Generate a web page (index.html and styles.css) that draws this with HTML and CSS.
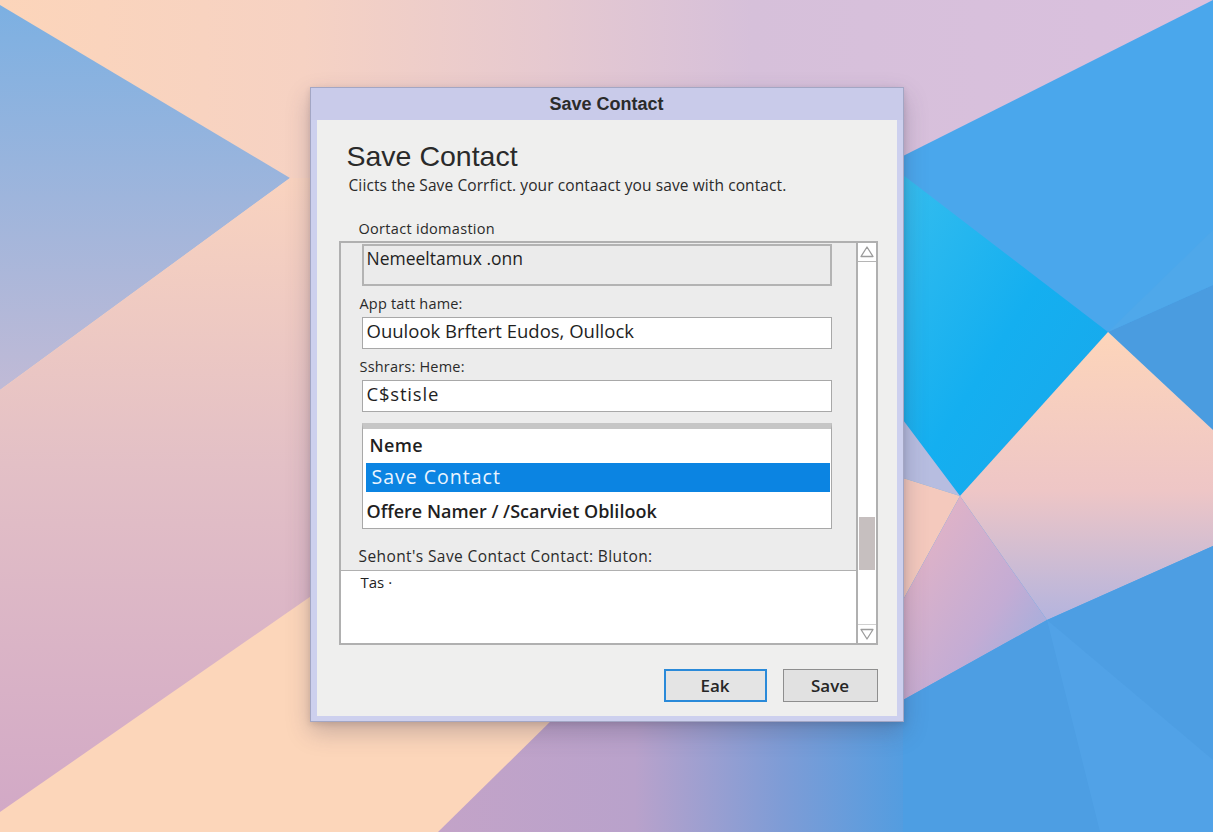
FILE: index.html
```html
<!DOCTYPE html>
<html lang="en">
<head>
<meta charset="utf-8">
<title>Save Contact</title>
<link rel="stylesheet" href="styles.css">
</head>
<body>
<div class="desktop">
  <svg class="wallpaper" viewBox="0 0 1213 832" preserveAspectRatio="none" aria-hidden="true">
    <defs>
      <linearGradient id="gTop" x1="0" y1="0" x2="1" y2="0">
        <stop offset="0" stop-color="#fcd5ba"/>
        <stop offset="0.25" stop-color="#f6d2c3"/>
        <stop offset="0.45" stop-color="#e6c9d0"/>
        <stop offset="0.62" stop-color="#d6c0da"/>
        <stop offset="1" stop-color="#dac0de"/>
      </linearGradient>
      <linearGradient id="gBlueL" x1="0" y1="0" x2="0" y2="1">
        <stop offset="0" stop-color="#7cb0e2"/>
        <stop offset="1" stop-color="#c0bad6"/>
      </linearGradient>
      <linearGradient id="gMidL" x1="0" y1="0" x2="0" y2="1">
        <stop offset="0" stop-color="#f9d3bf"/>
        <stop offset="0.45" stop-color="#e3c0c6"/>
        <stop offset="1" stop-color="#d2a9c6"/>
      </linearGradient>
      <linearGradient id="gPurple" x1="0" y1="0" x2="1" y2="0">
        <stop offset="0" stop-color="#c3a3c8"/>
        <stop offset="0.4" stop-color="#b9a2cb"/>
        <stop offset="0.7" stop-color="#7e9cd6"/>
        <stop offset="1" stop-color="#4a9de2"/>
      </linearGradient>
      <linearGradient id="gCyan" x1="0" y1="0" x2="1" y2="1">
        <stop offset="0" stop-color="#35bdee"/>
        <stop offset="0.5" stop-color="#14aff0"/>
        <stop offset="1" stop-color="#1aa7ea"/>
      </linearGradient>
      <linearGradient id="gPeachR" x1="0" y1="0" x2="0" y2="1">
        <stop offset="0" stop-color="#fdd5ba"/>
        <stop offset="0.55" stop-color="#eec6c6"/>
        <stop offset="1" stop-color="#b4b4de"/>
      </linearGradient>
      <linearGradient id="gPinkR" x1="0" y1="0" x2="1" y2="1">
        <stop offset="0" stop-color="#eab5c2"/>
        <stop offset="0.6" stop-color="#c4acd4"/>
        <stop offset="1" stop-color="#90b0e2"/>
      </linearGradient>
    </defs>
    <rect x="0" y="0" width="1213" height="832" fill="#fcd6ba"/>
    <rect x="0" y="0" width="1213" height="320" fill="url(#gTop)"/>
    <polygon points="0,5 290,178 0,390" fill="url(#gBlueL)"/>
    <polygon points="0,390 290,178 330,178 330,583 0,812" fill="url(#gMidL)"/>
    <polygon points="560,712 930,690 930,832 438,832" fill="url(#gPurple)"/>
    <polygon points="903,156 1213,0 1213,832 903,832" fill="#4aa7ec"/>
    <polygon points="1108,332 1213,285 1213,430" fill="#4a9ce0"/>
    <polygon points="1108,332 1213,230 1213,285" fill="#4fa8ea"/>
    <polygon points="903,175 1108,332 960,496 903,420" fill="url(#gCyan)"/>
    <polygon points="903,420 960,496 903,478" fill="#b7bde0"/>
    <polygon points="960,496 1108,332 1213,430 1213,546 1047,620" fill="url(#gPeachR)"/>
    <polygon points="903,478 960,496 903,600" fill="#f4c9bd"/>
    <polygon points="960,496 1047,620 903,700 903,600" fill="url(#gPinkR)"/>
    <polygon points="903,700 1047,620 1213,546 1213,832 903,832" fill="#4d9ee3"/>
    <polygon points="1047,620 1213,760 1213,832 1100,832" fill="#52a4e8" opacity="0.7"/>
  </svg>

  <div class="dialog">
    <div class="titlebar">Save Contact</div>
    <div class="dialog-body">
      <h1 class="heading">Save Contact</h1>
      <p class="subtitle">Ciicts the Save Corrfict. your contaact you save with contact.</p>
      <div class="section-label">Oortact idomastion</div>
      <div class="panel">
        <div class="panel-content">
          <div class="panel-form">
            <div class="field field-gray">Nemeeltamux .onn</div>
            <div class="label">App tatt hame:</div>
            <div class="field">Ouulook Brftert Eudos, Oullock</div>
            <div class="label">Sshrars: Heme:</div>
            <div class="field field-short">C$stisle</div>
            <div class="listbox">
              <div class="list-row list-head">Neme</div>
              <div class="list-row list-selected">Save Contact</div>
              <div class="list-row list-last">Offere Namer / /Scarviet Oblilook</div>
            </div>
            <div class="label label-last">Sehont's Save Contact Contact: Bluton:</div>
          </div>
          <div class="panel-notes">Tas ·</div>
        </div>
        <div class="scrollbar">
          <div class="scroll-btn scroll-up">
            <svg width="18" height="16" viewBox="0 0 18 16"><path d="M3 12.5 L9 3 L15 12.5 Z" fill="none" stroke="#9c9c9c" stroke-width="1.3" stroke-linejoin="round"/></svg>
          </div>
          <div class="scroll-track">
            <div class="scroll-thumb"></div>
          </div>
          <div class="scroll-btn scroll-down">
            <svg width="18" height="16" viewBox="0 0 18 16"><path d="M3 3.5 L9 13 L15 3.5 Z" fill="none" stroke="#9c9c9c" stroke-width="1.3" stroke-linejoin="round"/></svg>
          </div>
        </div>
      </div>
      <div class="actions">
        <button class="btn btn-primary">Eak</button>
        <button class="btn">Save</button>
      </div>
    </div>
  </div>
</div>
</body>
</html>
```
FILE: styles.css
```css
* { box-sizing: border-box; }

html, body {
  margin: 0;
  padding: 0;
}

body {
  font-family: "Open Sans", "Liberation Sans", Arial, sans-serif;
  color: #222;
  overflow: hidden;
}

.desktop {
  position: relative;
  width: 1213px;
  height: 832px;
  display: flex;
  justify-content: center;
  align-items: flex-start;
  padding-top: 87px;
}

.wallpaper {
  position: absolute;
  left: 0;
  top: 0;
  width: 1213px;
  height: 832px;
  z-index: 0;
}

.dialog {
  position: relative;
  z-index: 1;
  width: 594px;
  height: 635px;
  background: #cdd0ee;
  border: 1px solid #a3a6c4;
  padding: 0 6px 6px;
  display: flex;
  flex-direction: column;
  box-shadow: 0 10px 22px rgba(70, 60, 90, 0.28), 0 2px 6px rgba(0, 0, 0, 0.12);
}

.titlebar {
  height: 32px;
  line-height: 32px;
  text-align: center;
  font-family: "Liberation Sans", Arial, sans-serif;
  font-size: 18px;
  font-weight: bold;
  color: #2b2b2b;
  background: #c9cbea;
  margin: 0 -6px;
}

.dialog-body {
  flex: 1;
  background: #efefee;
  padding: 19px 19px 14px 22px;
  display: flex;
  flex-direction: column;
}

.heading {
  margin: 0 0 0 8px;
  font-family: "Liberation Sans", Arial, sans-serif;
  font-size: 28.5px;
  line-height: 34px;
  font-weight: normal;
  color: #2a2a2a;
}

.subtitle {
  margin: 3px 0 0 10px;
  font-size: 15.5px;
  line-height: 18px;
  letter-spacing: 0.1px;
  color: #2a2a2a;
}

.section-label {
  margin: 26px 0 0 20px;
  font-size: 14.5px;
  line-height: 17px;
  letter-spacing: 0.3px;
  color: #2a2a2a;
}

.panel {
  margin-top: 4px;
  height: 404px;
  border: 2px solid #b0b0b0;
  display: flex;
  background: #fff;
}

.panel-content {
  flex: 1;
  display: flex;
  flex-direction: column;
}

.panel-form {
  background: #ececec;
  padding: 1px 24px 5px 21px;
}

.field {
  border: 1px solid #a8a8a8;
  background: #fff;
  font-size: 18.5px;
  line-height: 22px;
  padding: 2px 5px 6px 4px;
  color: #1f1f1f;
}

.field-gray {
  background: #ebebeb;
  padding-bottom: 15px;
  font-size: 17.5px;
  border-width: 2px;
  border-color: #b3b3b3;
  padding-top: 1px;
  padding-left: 3px;
}

.field-short {
  letter-spacing: 0.8px;
  font-weight: 500;
}

.label {
  margin: 9px 0 4px -2px;
  font-size: 14.5px;
  line-height: 18px;
  letter-spacing: 0.2px;
  color: #2a2a2a;
}

.listbox {
  margin-top: 11px;
  border: 1px solid #a8a8a8;
  border-top: 6px solid #c6c6c6;
  background: #fff;
  padding: 0 1px 0 3px;
}

.list-row {
  font-size: 18px;
  color: #1f1f1f;
}

.list-head {
  height: 34px;
  line-height: 33px;
  padding-left: 4px;
  font-weight: 600;
  font-size: 18px;
  letter-spacing: 0.4px;
}

.list-selected {
  height: 29px;
  line-height: 28px;
  background: #0b84e2;
  color: #eaf4ff;
  font-size: 19.5px;
  padding-left: 6px;
  letter-spacing: 1px;
}

.list-last {
  height: 36px;
  line-height: 34px;
  padding-top: 2px;
  padding-left: 1px;
  font-weight: 600;
  font-size: 18px;
}

.label-last {
  margin: 18px 0 0 -3px;
  font-size: 15.5px;
  letter-spacing: 0.4px;
}

.panel-notes {
  flex: 1;
  background: #fff;
  border-top: 1px solid #b0b0b0;
  padding: 2px 0 0 20px;
  font-size: 15px;
  line-height: 18px;
  color: #222;
}

.scrollbar {
  width: 20px;
  border-left: 2px solid #b0b0b0;
  background: #fff;
  display: flex;
  flex-direction: column;
}

.scroll-btn {
  height: 19px;
  display: flex;
  align-items: center;
  justify-content: center;
}

.scroll-up {
  border-bottom: 1px solid #b5b5b5;
}

.scroll-down {
  border-top: 1px solid #d0d0d0;
}

.scroll-track {
  flex: 1;
  display: flex;
  flex-direction: column;
  justify-content: flex-end;
  padding: 0 1px 54px;
}

.scroll-thumb {
  height: 53px;
  background: #c6bfbf;
}

.actions {
  margin-top: 24px;
  display: flex;
  justify-content: flex-end;
  gap: 16px;
}

.btn {
  height: 33px;
  font-family: "Open Sans", "Liberation Sans", Arial, sans-serif;
  font-size: 17px;
  font-weight: 600;
  color: #262626;
  background: #e1e1e1;
  border: 1px solid #8e8e8e;
  padding: 0;
  width: 95px;
}

.btn-primary {
  width: 103px;
  border: 2px solid #2a8ad9;
  background: #e4e4e4;
}
```
